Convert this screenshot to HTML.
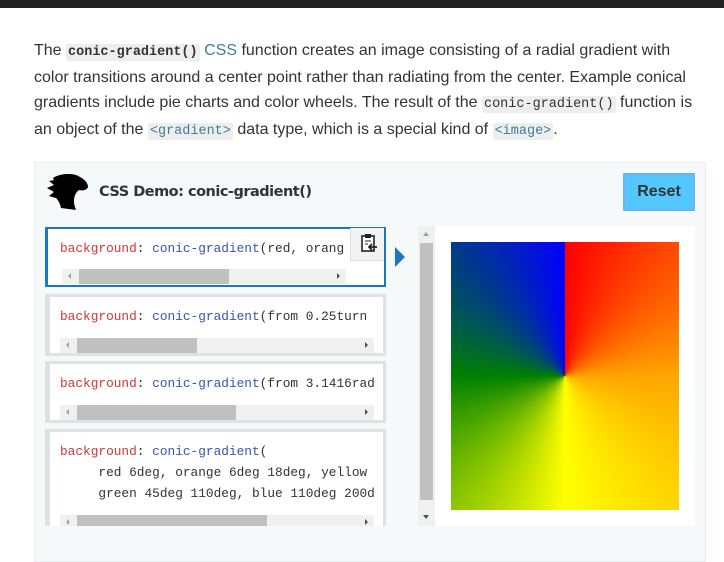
<!DOCTYPE html>
<html><head><meta charset="utf-8"><style>
*{box-sizing:border-box;margin:0;padding:0}
body{width:724px;height:545px;overflow:hidden;background:#fff;font-family:"Liberation Sans",Arial,sans-serif;color:#333;position:relative}
.top{position:absolute;left:0;top:0;width:724px;height:8px;background:#222}
p{position:absolute;left:34px;top:38px;width:690px;font-size:16px;line-height:25px;color:#333;white-space:nowrap}
code{font-family:"Liberation Mono",monospace;font-size:13.5px;background:#eee;padding:1px 2px;border-radius:2px}
code.b{font-weight:bold;color:#333}
code.l{color:#3d7e9a}
a{color:#3d7e9a;text-decoration:none}
.box{position:absolute;left:34px;top:162px;width:672px;height:400px;background:#f5f9fa;border:1px solid #e6eef0}
.title{position:absolute;left:99px;top:184px;font-size:14.5px;font-weight:bold;color:#333;font-family:"DejaVu Sans",sans-serif;letter-spacing:-0.5px}
.reset{position:absolute;left:623px;top:173px;width:72px;height:38px;background:#55c7ff;border:2px solid #6bb5f2;font-weight:bold;font-size:16px;color:#333;text-align:center;line-height:34px}
.ed{position:absolute;left:45px;width:341px;background:#fff;border:3px solid #dde3e5;border-left-width:5px;font-family:"Liberation Mono",monospace;font-size:12.8px;color:#333;overflow:hidden}
.ed.a{border:2px solid #1b76c4;border-left-width:3px}
.ln{position:absolute;left:10px;white-space:pre}
.ed.a .ln{left:12px}
.k{color:#d53535}.f{color:#3455b6}
.sb{position:absolute;left:10px;width:284px;height:15px;background:#f0f0f0}
.sb .t{position:absolute;left:17px;top:0;height:15px;background:#c0c0c0}
.sb .la,.sb .ra{position:absolute;top:4px;width:0;height:0;border-top:3.5px solid transparent;border-bottom:3.5px solid transparent}
.sb .la{left:6px;border-right:3px solid #a0a0a0}
.sb .ra{right:6px;border-left:3px solid #505050}
.copy{position:absolute;left:350px;top:228px;width:34px;height:33px;background:#f3f3f3;border-left:1px solid #ddd;border-bottom:1px solid #ddd}
.play{position:absolute;left:395px;top:247px;width:0;height:0;border-top:10px solid transparent;border-bottom:10px solid transparent;border-left:10px solid #1b76c4}
.vs{position:absolute;left:418px;top:226px;width:17px;height:300px;background:#f0f0f0}
.vs .t{position:absolute;left:2px;top:17px;width:13px;height:257px;background:#c0c0c0}
.out{position:absolute;left:435px;top:226px;width:260px;height:300px;background:#fff}
.g{position:absolute;left:451px;top:242px;width:228px;height:268px;background:conic-gradient(red,orange,yellow,green,blue)}
</style></head><body>
<div class="top"></div>
<p>The <code class="b">conic-gradient()</code> <a>CSS</a> function creates an image consisting of a radial gradient with<br>color transitions around a center point rather than radiating from the center. Example conical<br>gradients include pie charts and color wheels. The result of the <code>conic-gradient()</code> function is<br>an object of the <code class="l">&lt;gradient&gt;</code> data type, which is a special kind of <code class="l">&lt;image&gt;</code>.</p>
<div class="box"></div>
<svg style="position:absolute;left:45px;top:172px" width="46" height="40" viewBox="0 0 46 40"><path d="M8 6 C14 2 24 1 31 3 C38 6 43 10 43 15 C42 18 38 19 34 18 C31 20 29 24 29 29 C29 33 30 35 31 38 L16 36 C15 31 13 28 11 26 L4 24 L9 20 L2 16 L9 13 L4 9 L9 8 Z" fill="#000"/></svg>
<div class="title">CSS Demo: conic-gradient()</div>
<div class="reset">Reset</div>

<div class="ed a" style="top:227px;height:60px">
<div class="ln" style="top:12px"><span class="k">background</span>: <span class="f">conic-gradient</span>(red, orang</div>
<div class="sb" style="top:40px;left:14px;width:284px"><div class="la"></div><div class="t" style="width:150px"></div><div class="ra"></div></div>
</div>
<div class="copy"><svg width="34" height="33" viewBox="0 0 34 33"><rect x="11" y="8" width="12" height="15" fill="#fff" stroke="#222" stroke-width="1.6"/><rect x="14" y="6" width="6" height="4" fill="#222"/><path d="M14 13h6M14 16h3" stroke="#222"/><path d="M26 19h-7M21 16l-3 3 3 3" stroke="#222" stroke-width="1.8" fill="none"/></svg></div>
<div class="play"></div>

<div class="ed" style="top:294px;height:62px">
<div class="ln" style="top:12px"><span class="k">background</span>: <span class="f">conic-gradient</span>(from 0.25turn</div>
<div class="sb" style="top:41px;width:314px"><div class="la"></div><div class="t" style="width:120px"></div><div class="ra"></div></div>
</div>
<div class="ed" style="top:361px;height:62px">
<div class="ln" style="top:12px"><span class="k">background</span>: <span class="f">conic-gradient</span>(from 3.1416rad</div>
<div class="sb" style="top:41px;width:314px"><div class="la"></div><div class="t" style="width:159px"></div><div class="ra"></div></div>
</div>
<div class="ed" style="top:429px;height:97px;border-bottom:0">
<div class="ln" style="top:12px"><span class="k">background</span>: <span class="f">conic-gradient</span>(</div>
<div class="ln" style="top:33px">     red 6deg, orange 6deg 18deg, yellow</div>
<div class="ln" style="top:54px">     green 45deg 110deg, blue 110deg 200d</div>
<div class="sb" style="top:83px;width:314px"><div class="la"></div><div class="t" style="width:190px"></div><div class="ra"></div></div>
</div>

<div class="vs"><div style="position:absolute;left:5px;top:6px;border-left:3.5px solid transparent;border-right:3.5px solid transparent;border-bottom:4px solid #a0a0a0"></div><div class="t"></div><div style="position:absolute;left:5px;top:289px;border-left:3.5px solid transparent;border-right:3.5px solid transparent;border-top:4px solid #505050"></div></div>
<div class="out"></div>
<div class="g"></div>
</body></html>
